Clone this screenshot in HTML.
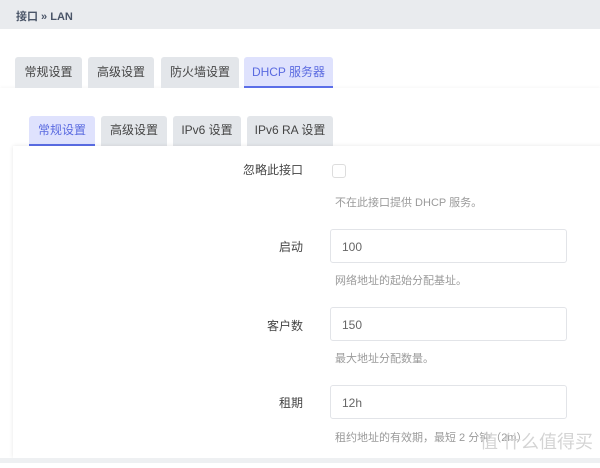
<!DOCTYPE html><html><head><meta charset="utf-8"><style>
body{margin:0;width:600px;height:463px;overflow:hidden;background:#fff;font-family:"Liberation Sans","Noto Sans CJK SC",sans-serif;position:relative}
.top{position:absolute;left:0;top:0;width:600px;height:29px;background:#e9ebee;font-size:11px;color:#4a5568;font-weight:bold}
.top span{position:absolute;left:16px;top:8px}
.t{position:absolute;height:31px;background:#e3e6ea;border-radius:3px 3px 0 0;font-size:12px;color:#444;text-align:center;line-height:31px}
.a{background:#dfe2fd;color:#5a6ae0;border-bottom:2px solid #5b6ee8;box-sizing:border-box}
.panel{position:absolute;left:0;top:88px;width:600px;height:380px;background:#fff;box-shadow:0 0 4px rgba(0,0,0,.06)}
.card{position:absolute;left:13px;top:146px;width:600px;height:312px;background:#fff;box-shadow:0 0 4px rgba(0,0,0,.1)}
.l{position:absolute;right:297px;font-size:12px;color:#444}
.in{position:absolute;left:330px;width:237px;height:34px;border:1px solid #e2e4e8;border-radius:3px;box-sizing:border-box;font-size:12px;color:#666;padding:10px 0 0 11px}
.h{position:absolute;left:335px;font-size:11px;color:#9a9a9a}
.bot{position:absolute;left:0;top:458px;width:600px;height:5px;background:#eef0f2}
</style></head><body>
<div class="top"><span>接口 » LAN</span></div>
<div class="panel"></div>
<div class="t" style="left:15px;top:57px;width:67px">常规设置</div>
<div class="t" style="left:88px;top:57px;width:66px">高级设置</div>
<div class="t" style="left:161px;top:57px;width:78px">防火墙设置</div>
<div class="t a" style="left:244px;top:57px;width:89px">DHCP 服务器</div>
<div class="t a" style="left:29px;top:116px;width:66px;height:30px;line-height:28px">常规设置</div>
<div class="t" style="left:101px;top:116px;width:66px;height:30px;line-height:28px">高级设置</div>
<div class="t" style="left:173px;top:116px;width:68px;height:30px;line-height:28px">IPv6 设置</div>
<div class="t" style="left:247px;top:116px;width:86px;height:30px;line-height:28px">IPv6 RA 设置</div>
<div class="card"></div>
<div class="l" style="top:161px">忽略此接口</div>
<div style="position:absolute;left:332px;top:164px;width:12px;height:12px;border:1px solid #ddd;border-radius:3px"></div>
<div class="h" style="top:194px">不在此接口提供 DHCP 服务。</div>
<div class="l" style="top:238px">启动</div><div class="in" style="top:229px">100</div>
<div class="h" style="top:272px">网络地址的起始分配基址。</div>
<div class="l" style="top:317px">客户数</div><div class="in" style="top:307px">150</div>
<div class="h" style="top:350px">最大地址分配数量。</div>
<div class="l" style="top:394px">租期</div><div class="in" style="top:385px">12h</div>
<div class="h" style="top:429px">租约地址的有效期，最短 2 分钟（2m）</div>
<div style="position:absolute;left:480px;top:428px;font-size:18px;color:#d4d4d4">值 什么值得买</div>
<div class="bot"></div>
</body></html>
